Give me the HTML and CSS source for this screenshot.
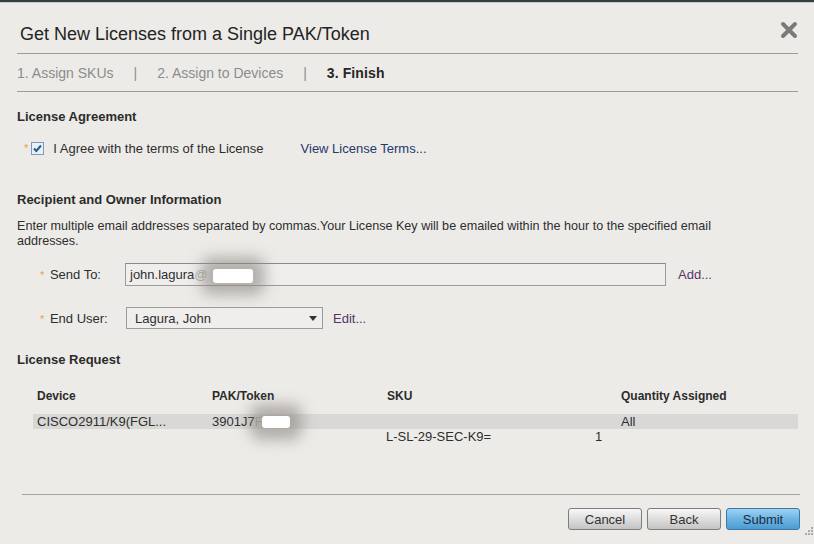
FILE: index.html
```html
<!DOCTYPE html>
<html>
<head>
<meta charset="utf-8">
<link rel="stylesheet" href="styles.css">
</head>
<body>
<div class="topbar"></div>
<div class="dialog">
  <header class="title-row">
    <h1 class="title">Get New Licenses from a Single PAK/Token</h1>
    <svg class="close" width="18" height="18" viewBox="0 0 18 18"><path d="M3 3 L15 15 M15 3 L3 15" stroke="#7a7a7a" stroke-width="4" stroke-linecap="round"/></svg>
  </header>
  <nav class="steps">
    <span class="step">1. Assign SKUs</span>
    <span class="sep">|</span>
    <span class="step">2. Assign to Devices</span>
    <span class="sep">|</span>
    <span class="step current">3. Finish</span>
  </nav>

  <section class="sec-agree">
    <h2 class="sec-title">License Agreement</h2>
    <div class="agree-row">
      <span class="req">*</span>
      <svg class="check" width="13" height="13" viewBox="0 0 13 13"><rect x="0.5" y="0.5" width="12" height="12" fill="#e9f0f6" stroke="#7d9bb8"/><path d="M3 6.5 L5.3 9 L10 3.5" fill="none" stroke="#1f5e86" stroke-width="2"/></svg>
      <span class="agree-text">I Agree with the terms of the License</span>
      <a class="link terms">View License Terms...</a>
    </div>
  </section>

  <section class="sec-recipient">
    <h2 class="sec-title">Recipient and Owner Information</h2>
    <p class="hint">Enter multiple email addresses separated by commas.Your License Key will be emailed within the hour to the specified email addresses.</p>
    <div class="form-row send-row">
      <label class="lbl"><span class="req">*</span> Send To:</label>
      <div class="input">
        <span>john.lagura</span><span class="faded">@</span>
        <span class="blur blur-mail"></span>
      </div>
      <a class="link visited">Add...</a>
    </div>
    <div class="form-row user-row">
      <label class="lbl"><span class="req">*</span> End User:</label>
      <div class="select">
        <span>Lagura, John</span>
        <svg class="arrow" width="8" height="5" viewBox="0 0 8 5"><path d="M0 0 H8 L4 5 Z" fill="#333"/></svg>
      </div>
      <a class="link visited">Edit...</a>
    </div>
  </section>

  <section class="sec-request">
    <h2 class="sec-title">License Request</h2>
    <div class="table">
      <div class="thead">
        <span>Device</span><span>PAK/Token</span><span>SKU</span><span>Quantity Assigned</span>
      </div>
      <div class="trow">
        <span>CISCO2911/K9(FGL...</span>
        <span class="pak">3901J7<span class="faded">F</span><span class="blur blur-pak"></span></span>
        <span></span>
        <span>All</span>
      </div>
      <div class="tsub">
        <span></span><span></span>
        <span class="sku"><span class="sku-name">L-SL-29-SEC-K9=</span><span>1</span></span>
        <span></span>
      </div>
    </div>
  </section>

  <footer class="footer">
    <button class="btn">Cancel</button>
    <button class="btn">Back</button>
    <button class="btn primary">Submit</button>
  </footer>
</div>
<svg class="grip" width="10" height="16" viewBox="0 0 10 16"><g fill="#a9a9a9"><rect x="7" y="1" width="2" height="2"/><rect x="4" y="4" width="2" height="2"/><rect x="7" y="4" width="2" height="2"/><rect x="1" y="7" width="2" height="2"/><rect x="4" y="7" width="2" height="2"/><rect x="7" y="7" width="2" height="2"/></g></svg>
</body>
</html>
```

FILE: styles.css
```css
html, body {
  margin: 0;
  padding: 0;
}
body {
  background: #edebe8;
  font-family: "Liberation Sans", Arial, sans-serif;
  color: #2e2e2e;
  font-size: 13px;
  width: 814px;
  height: 544px;
  overflow: hidden;
  position: relative;
}
.topbar {
  height: 2px;
  background: #33403f;
  border-bottom: 1px solid #c9ccc8;
}
.dialog {
  padding: 0 16px 0 17px;
}
.title-row {
  display: flex;
  justify-content: space-between;
  align-items: flex-start;
  padding: 20px 0 8px 3px;
  border-bottom: 1px solid #9d9d9b;
}
.title {
  margin: 0;
  font-size: 18px;
  line-height: 22px;
  font-weight: normal;
  color: #232323;
}
.close {
  margin: -2px 0 0 0;
}
.steps {
  display: flex;
  padding: 10px 0 9px 0;
  font-size: 14px;
  line-height: 18px;
  border-bottom: 1px solid #9d9d9b;
}
.step {
  color: #8c8c8c;
}
.sep {
  color: #8c8c8c;
  margin: 0 20px 0 20px;
}
.step.current {
  color: #262626;
  font-weight: bold;
  letter-spacing: 0.1px;
}
.sec-title {
  margin: 0;
  font-size: 13px;
  line-height: 16px;
  font-weight: bold;
  color: #2b2b2b;
}
.sec-agree {
  padding-top: 17px;
}
.agree-row {
  display: flex;
  align-items: center;
  height: 16px;
  margin-top: 15px;
  padding-left: 7px;
}
.req {
  color: #e3a43a;
  font-size: 11px;
}
.check {
  margin-left: 3px;
}
.agree-text {
  margin-left: 9px;
}
.link {
  color: #25396b;
  cursor: pointer;
}
.link.visited {
  color: #553766;
}
.terms {
  margin-left: 37px;
}
.sec-recipient {
  padding-top: 36px;
}
.hint {
  margin: 11px 0 0 0;
  line-height: 15px;
  font-size: 12.6px;
  width: 740px;
}
.form-row {
  display: flex;
  align-items: center;
  padding-left: 23px;
}
.send-row {
  margin-top: 14px;
}
.user-row {
  margin-top: 21px;
}
.lbl {
  width: 85px;
}
.lbl .req {
  margin-right: 2px;
}
.input {
  position: relative;
  width: 535px;
  height: 21px;
  border: 1px solid #9b9b9b;
  border-top-color: #8a8a8a;
  background: #efeeec;
  padding: 0 0 0 4px;
  line-height: 21px;
  overflow: visible;
}
.faded {
  color: #b0aeab;
}
.blur {
  position: absolute;
  background: #ffffff;
  box-shadow: 0 0 14px 12px rgba(140, 135, 130, 0.6);
  border-radius: 3px;
}
.blur-mail {
  left: 87px;
  top: 5px;
  width: 40px;
  height: 14px;
}
.send-row .link {
  margin-left: 12px;
}
.select {
  position: relative;
  display: flex;
  align-items: center;
  justify-content: space-between;
  width: 182px;
  height: 20px;
  border: 1px solid #9b9b9b;
  background: #efeeec;
  padding: 0 5px 0 8px;
  margin-left: 1px;
}
.user-row .link {
  margin-left: 10px;
}
.sec-request {
  padding-top: 23px;
}
.table {
  margin: 20px 0 0 16px;
  font-size: 12px;
}
.thead, .trow, .tsub {
  display: grid;
  grid-template-columns: 175px 175px 234px 1fr;
  padding-left: 4px;
}
.thead {
  font-weight: bold;
  line-height: 16px;
  color: #2b2b2b;
}
.trow {
  margin-top: 10px;
  background: #d9d8d6;
  height: 15px;
  line-height: 15px;
  font-size: 13px;
}
.pak {
  position: relative;
}
.blur-pak {
  left: 50px;
  top: 2px;
  width: 28px;
  height: 12px;
}
.tsub {
  height: 15px;
  line-height: 15px;
  font-size: 13px;
}
.sku {
  display: flex;
  margin-left: -1px;
}
.sku-name {
  width: 209px;
}
.footer {
  display: flex;
  justify-content: flex-end;
  gap: 5px;
  margin: 50px -2px 0 5px;
  padding-top: 13px;
  border-top: 1px solid #a4a4a2;
}
.btn {
  width: 74px;
  height: 22px;
  font-family: "Liberation Sans", Arial, sans-serif;
  font-size: 13px;
  color: #333;
  border: 1px solid #7d7d7d;
  border-radius: 3px;
  background: linear-gradient(#f7f7f7, #dedede 50%, #c4c4c4);
  padding: 0;
}
.btn.primary {
  color: #1c2d44;
  border-color: #3b76a6;
  background: linear-gradient(#9fd2f2, #6db4e4 50%, #4d9bd2);
}
.grip {
  position: absolute;
  right: 0;
  bottom: 2px;
}
```
